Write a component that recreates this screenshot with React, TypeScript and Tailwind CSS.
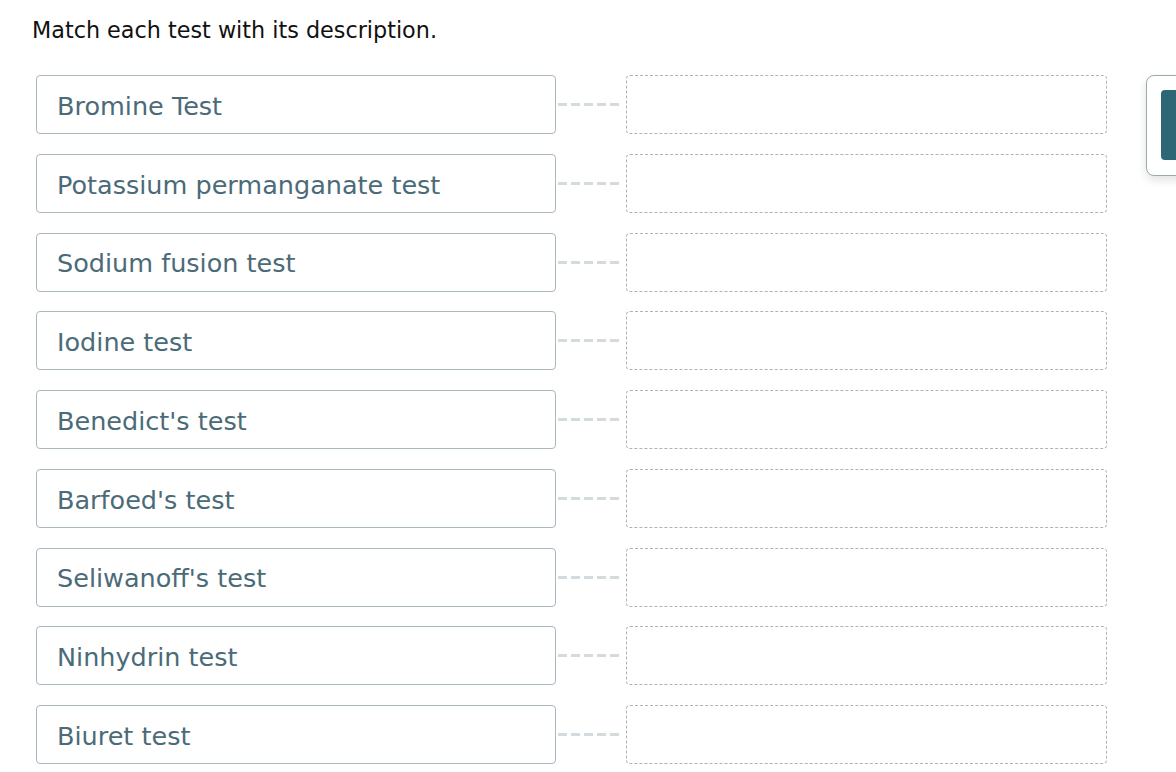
import React from "react";

const tests = [
  "Bromine Test",
  "Potassium permanganate test",
  "Sodium fusion test",
  "Iodine test",
  "Benedict's test",
  "Barfoed's test",
  "Seliwanoff's test",
  "Ninhydrin test",
  "Biuret test",
];

const App = () => {
  return (
    <div className="relative w-[1176px] h-[772px] overflow-hidden bg-white font-['DejaVu_Sans',Verdana,sans-serif]">
      <p className="pt-[15px] pl-[32px] text-[22.3px] leading-[30px] text-[#111]">
        Match each test with its description.
      </p>

      <div className="mt-[30px] ml-[36px] flex flex-col gap-[19.75px]">
        {tests.map((name, i) => (
          <div key={i} className="flex items-center h-[59px]">
            {/* term */}
            <div className="w-[520px] h-full flex items-center pl-[20px] pt-[3px] border border-[#a9b8bf] rounded-[4px] text-[25.5px] text-[#4b6b78]">
              {name}
            </div>
            {/* connector */}
            <div className="w-[70px] pl-[2px]">
              <div className="w-[62px] h-[3px] bg-[repeating-linear-gradient(90deg,#d3dbde_0px,#d3dbde_9px,transparent_9px,transparent_13px)]" />
            </div>
            {/* drop zone */}
            <div className="w-[481px] h-full border border-dashed border-[#aab5ba] rounded-[4px]" />
          </div>
        ))}
      </div>

      {/* side panel peeking in */}
      <div className="absolute left-[1146px] top-[75px] w-[80px] h-[101px] border border-[#9aa9af] rounded-[8px] bg-white shadow-[0_4px_10px_rgba(0,0,0,0.12)] p-[14px]">
        <div className="w-[60px] h-[70px] rounded-[4px] bg-[#2d6675]" />
      </div>
    </div>
  );
};

export default App;
